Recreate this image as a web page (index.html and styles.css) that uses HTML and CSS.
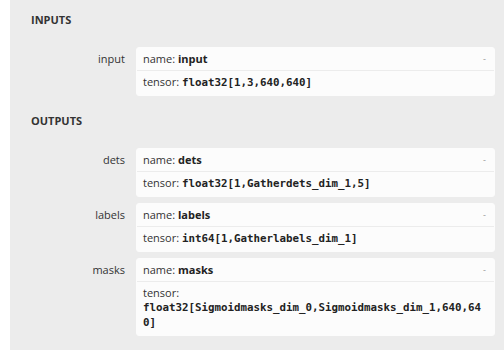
FILE: index.html
```html
<!DOCTYPE html>
<html lang="en">
<head>
  <meta charset="UTF-8">
  <meta name="viewport" content="width=device-width, initial-scale=1.0">
  <title>Model Properties</title>
  <link rel="stylesheet" href="styles.css">
</head>
<body>

  <div class="panel">
    <div class="section">
      <div class="section-title">Inputs</div>
      <div class="item">
        <div class="item-name">input</div>
        <div class="item-value">
          <div class="value-line">name: <b>input</b><span class="expander">-</span></div>
          <div class="value-line value-line-border">tensor: <code>float32[1,3,640,640]</code></div>
        </div>
      </div>
    </div>

    <div class="section">
      <div class="section-title">Outputs</div>
      <div class="item">
        <div class="item-name">dets</div>
        <div class="item-value">
          <div class="value-line">name: <b>dets</b><span class="expander">-</span></div>
          <div class="value-line value-line-border">tensor: <code>float32[1,Gatherdets_dim_1,5]</code></div>
        </div>
      </div>
      <div class="item">
        <div class="item-name">labels</div>
        <div class="item-value">
          <div class="value-line">name: <b>labels</b><span class="expander">-</span></div>
          <div class="value-line value-line-border">tensor: <code>int64[1,Gatherlabels_dim_1]</code></div>
        </div>
      </div>
      <div class="item">
        <div class="item-name">masks</div>
        <div class="item-value">
          <div class="value-line">name: <b>masks</b><span class="expander">-</span></div>
          <div class="value-line value-line-border">tensor: <code>float32[Sigmoidmasks_dim_0,Sigmoidmasks_dim_1,640,640]</code></div>
        </div>
      </div>
    </div>
  </div>

</body>
</html>
```

FILE: styles.css
```css
body {
  margin: 0;
  background-color: #fff;
  font-family: "Open Sans", "Noto Sans", sans-serif;
  font-size: 11px;
  line-height: 14px;
  color: #333;
}
.panel {
  margin-left: 10px;
  min-height: 350px;
  box-sizing: border-box;
  padding: 13px 9px 18px 21px;
  background-color: #ececec;
}
.section {
  display: flex;
  flex-direction: column;
  gap: 6px;
}
.section + .section {
  margin-top: 18px;
}
.section-title {
  font-weight: bold;
  text-transform: uppercase;
  color: #333;
  margin-bottom: 14px;
}
.item {
  display: flex;
}
.item-name {
  width: 94px;
  flex-shrink: 0;
  padding-top: 5px;
  text-align: right;
  color: #333;
}
.item-value {
  flex: 1;
  min-width: 0;
  margin-left: 11px;
  padding-bottom: 1px;
  background-color: #fcfcfc;
  border: 1px solid #fcfcfc;
  border-radius: 3px;
}
.value-line {
  padding: 4px 8px 4px 6px;
  overflow-wrap: break-word;
}
.value-line b {
  font-weight: bold;
  color: #222;
}
.value-line-border {
  border-top: 1px solid #ececec;
}
.value-line code {
  font-family: "DejaVu Sans Mono", "Liberation Mono", monospace;
  font-size: 10.8px;
  font-weight: bold;
  color: #222;
}
.expander {
  float: right;
  font-size: 9px;
  color: #999;
}
```
